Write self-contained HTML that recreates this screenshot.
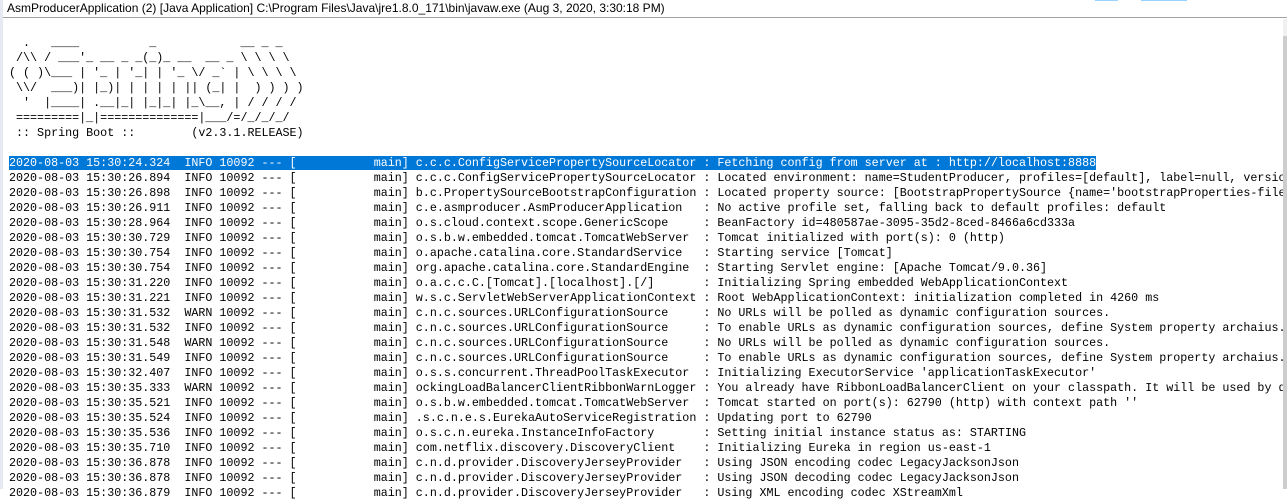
<!DOCTYPE html>
<html><head><style>
html,body{margin:0;padding:0;width:1287px;height:489px;overflow:hidden;background:#fff;}
.title{position:absolute;left:0;top:0;width:1287px;height:17px;border-bottom:1px solid #a0a0a0;font:12px "Liberation Sans",sans-serif;color:#000;line-height:17px;}
.title span{padding-left:7px;}
.lb{position:absolute;left:0;top:0;width:3px;height:489px;background:#e6e8f2;}
.c{position:absolute;left:9px;top:36px;font:11.7px "Liberation Mono",monospace;line-height:15px;color:#000;white-space:pre;}
.hl{background:#0078d7;color:#fff;}
.sb{position:absolute;left:1283px;top:19px;width:4px;height:470px;background:#f0f0f0;}
.sb div{position:absolute;top:17px;width:4px;height:453px;background:#cdcdcd;}
.b1{position:absolute;top:0;height:1px;background:#99d1ff;}
</style></head><body>
<div class="title"><span>AsmProducerApplication (2) [Java Application] C:\Program Files\Java\jre1.8.0_171\bin\javaw.exe (Aug 3, 2020, 3:30:18 PM)</span></div>
<div class="b1" style="left:1095px;width:23px"></div><div class="b1" style="left:1141px;width:46px"></div>
<div class="lb"></div>
<div class="c">  .   ____          _            __ _ _
 /\\ / ___'_ __ _ _(_)_ __  __ _ \ \ \ \
( ( )\___ | '_ | '_| | '_ \/ _` | \ \ \ \
 \\/  ___)| |_)| | | | | || (_| |  ) ) ) )
  '  |____| .__|_| |_|_| |_\__, | / / / /
 =========|_|==============|___/=/_/_/_/
 :: Spring Boot ::        (v2.3.1.RELEASE)

<span class="hl">2020-08-03 15:30:24.324  INFO 10092 --- [           main] c.c.c.ConfigServicePropertySourceLocator : Fetching config from server at : http://localhost:8888</span>
2020-08-03 15:30:26.894  INFO 10092 --- [           main] c.c.c.ConfigServicePropertySourceLocator : Located environment: name=StudentProducer, profiles=[default], label=null, version
2020-08-03 15:30:26.898  INFO 10092 --- [           main] b.c.PropertySourceBootstrapConfiguration : Located property source: [BootstrapPropertySource {name='bootstrapProperties-file
2020-08-03 15:30:26.911  INFO 10092 --- [           main] c.e.asmproducer.AsmProducerApplication   : No active profile set, falling back to default profiles: default
2020-08-03 15:30:28.964  INFO 10092 --- [           main] o.s.cloud.context.scope.GenericScope     : BeanFactory id=480587ae-3095-35d2-8ced-8466a6cd333a
2020-08-03 15:30:30.729  INFO 10092 --- [           main] o.s.b.w.embedded.tomcat.TomcatWebServer  : Tomcat initialized with port(s): 0 (http)
2020-08-03 15:30:30.754  INFO 10092 --- [           main] o.apache.catalina.core.StandardService   : Starting service [Tomcat]
2020-08-03 15:30:30.754  INFO 10092 --- [           main] org.apache.catalina.core.StandardEngine  : Starting Servlet engine: [Apache Tomcat/9.0.36]
2020-08-03 15:30:31.220  INFO 10092 --- [           main] o.a.c.c.C.[Tomcat].[localhost].[/]       : Initializing Spring embedded WebApplicationContext
2020-08-03 15:30:31.221  INFO 10092 --- [           main] w.s.c.ServletWebServerApplicationContext : Root WebApplicationContext: initialization completed in 4260 ms
2020-08-03 15:30:31.532  WARN 10092 --- [           main] c.n.c.sources.URLConfigurationSource     : No URLs will be polled as dynamic configuration sources.
2020-08-03 15:30:31.532  INFO 10092 --- [           main] c.n.c.sources.URLConfigurationSource     : To enable URLs as dynamic configuration sources, define System property archaius.
2020-08-03 15:30:31.548  WARN 10092 --- [           main] c.n.c.sources.URLConfigurationSource     : No URLs will be polled as dynamic configuration sources.
2020-08-03 15:30:31.549  INFO 10092 --- [           main] c.n.c.sources.URLConfigurationSource     : To enable URLs as dynamic configuration sources, define System property archaius.
2020-08-03 15:30:32.407  INFO 10092 --- [           main] o.s.s.concurrent.ThreadPoolTaskExecutor  : Initializing ExecutorService 'applicationTaskExecutor'
2020-08-03 15:30:35.333  WARN 10092 --- [           main] ockingLoadBalancerClientRibbonWarnLogger : You already have RibbonLoadBalancerClient on your classpath. It will be used by d
2020-08-03 15:30:35.521  INFO 10092 --- [           main] o.s.b.w.embedded.tomcat.TomcatWebServer  : Tomcat started on port(s): 62790 (http) with context path ''
2020-08-03 15:30:35.524  INFO 10092 --- [           main] .s.c.n.e.s.EurekaAutoServiceRegistration : Updating port to 62790
2020-08-03 15:30:35.536  INFO 10092 --- [           main] o.s.c.n.eureka.InstanceInfoFactory       : Setting initial instance status as: STARTING
2020-08-03 15:30:35.710  INFO 10092 --- [           main] com.netflix.discovery.DiscoveryClient    : Initializing Eureka in region us-east-1
2020-08-03 15:30:36.878  INFO 10092 --- [           main] c.n.d.provider.DiscoveryJerseyProvider   : Using JSON encoding codec LegacyJacksonJson
2020-08-03 15:30:36.878  INFO 10092 --- [           main] c.n.d.provider.DiscoveryJerseyProvider   : Using JSON decoding codec LegacyJacksonJson
2020-08-03 15:30:36.879  INFO 10092 --- [           main] c.n.d.provider.DiscoveryJerseyProvider   : Using XML encoding codec XStreamXml</div>
<div class="sb"><div></div></div>
</body></html>
